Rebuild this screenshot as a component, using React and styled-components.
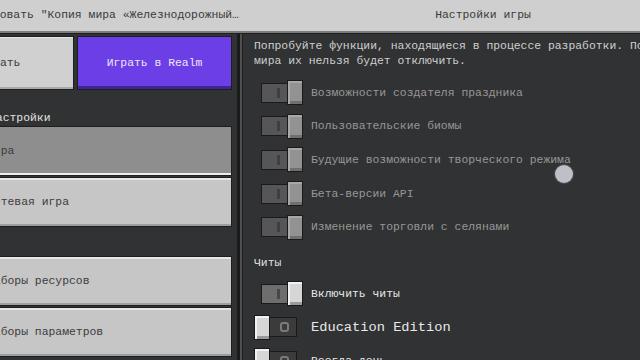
import React from "react";
import styled, { createGlobalStyle } from "styled-components";

const GlobalStyle = createGlobalStyle`
  html, body {
    margin: 0;
    padding: 0;
    background: #313233;
    overflow: hidden;
  }
  body {
    width: 640px;
    height: 360px;
  }
`;

// the screen is wider than the window: it is cropped on both sides
const Screen = styled.div`
  position: relative;
  width: 807px;
  height: 360px;
  margin-left: -84px;
  display: flex;
  flex-direction: column;
  font-family: "Liberation Mono", "DejaVu Sans Mono", monospace;
  font-size: 11.4px;
  background: #313233;
  overflow: hidden;
`;

const TopBar = styled.header`
  flex-shrink: 0;
  display: grid;
  grid-template-columns: 320px 7px 480px;
  height: 31px;
  line-height: 31px;
  background: #cfcfcf;
  border-bottom: 2px solid #7c7c7c;
  color: #3a3a3a;
`;

const TitleLeft = styled.div`
  padding-left: 29px;
  white-space: nowrap;
`;

const TitleRight = styled.div`
  grid-column: 3;
  text-align: center;
`;

const Body = styled.div`
  flex: 1;
  display: flex;
  min-height: 0;
  border-top: 1px solid #1e1e1f;
`;

const LeftPanel = styled.div`
  width: 320px;
  box-sizing: border-box;
  padding: 2px 4px 0 3px;
  display: flex;
  flex-direction: column;
`;

const ButtonRow = styled.div`
  display: flex;
  gap: 3px;
`;

const BigButton = styled.div`
  width: 155px;
  height: 54px;
  box-sizing: border-box;
  border: 1px solid #1e1e1f;
  display: flex;
  align-items: center;
  justify-content: center;
  background: ${(p) => (p.$primary ? "#6c3ee6" : "#d0d0d0")};
  color: ${(p) => (p.$primary ? "#ece6ff" : "#3a3a3a")};
  box-shadow: ${(p) =>
    p.$primary
      ? "inset 0 -3px 0 #3e2494"
      : "inset 0 1px 0 #e8e8e8, inset 0 -2px 0 #a9a9a9"};
`;

const SectionLabel = styled.div`
  padding: 20px 0 0 70px;
  line-height: 16px;
  color: #e2e2e2;
`;

const TabGroup = styled.div`
  display: flex;
  flex-direction: column;
  gap: 1px;
  margin-top: ${(p) => p.$gap || 0}px;
`;

const Tab = styled.div`
  height: 50px;
  box-sizing: border-box;
  border: 1px solid #1e1e1f;
  padding-left: 67px;
  display: flex;
  align-items: center;
  color: #3c3c3c;
  background: ${(p) => (p.$selected ? "#8e8e8e" : "#c6c6c6")};
  box-shadow: ${(p) =>
    p.$selected
      ? "inset 0 -2px 0 #ececec"
      : "inset 0 2px 0 #e6e6e6, inset 0 -2px 0 #9e9e9e"};
`;

const Divider = styled.div`
  width: 7px;
  flex-shrink: 0;
  background: linear-gradient(
    to right,
    #313233 0 1px,
    #1b1b1c 1px 4px,
    #505051 4px 6px,
    #1f1f20 6px 7px
  );
`;

const RightPanel = styled.div`
  width: 480px;
  box-sizing: border-box;
  padding: 4.5px 0 0 11px;
  display: flex;
  flex-direction: column;
`;

const Paragraph = styled.div`
  line-height: 15px;
  color: #cfcfcf;
  white-space: nowrap;
  span {
    display: block;
  }
`;

const ToggleList = styled.div`
  margin-top: ${(p) => p.$top || 0}px;
  display: flex;
  flex-direction: column;
`;

const Row = styled.div`
  height: 33.6px;
  display: flex;
  align-items: center;
  white-space: nowrap;
`;

const Track = styled.div`
  position: relative;
  width: 36px;
  height: 20px;
  box-sizing: border-box;
  margin-left: 7px;
  flex-shrink: 0;
  border: 1px solid #1a1a1b;
  display: flex;
  align-items: center;
  background: ${(p) =>
    !p.$on ? "#3b3b3c" : p.$disabled ? "#565658" : "#6e6e6e"};
`;

const Bar = styled.div`
  margin-left: 15px;
  width: 3px;
  height: 10px;
  background: ${(p) => (p.$disabled ? "#3f3f40" : "#474747")};
`;

const Ring = styled.div`
  margin-left: 18px;
  width: 5px;
  height: 6px;
  border: 2px solid #7a7a7a;
  border-radius: 3px;
`;

const Knob = styled.div`
  position: absolute;
  top: -3.5px;
  ${(p) => (p.$on ? "right: -7px;" : "left: -8px;")}
  width: 16px;
  height: 25px;
  box-sizing: border-box;
  border: 1px solid #1a1a1b;
  background: ${(p) => (p.$disabled ? "#929292" : "#d6d6d6")};
  box-shadow: ${(p) =>
    p.$disabled
      ? "inset 2px 2px 0 #a8a8a8, inset 0 -3px 0 #707070"
      : "inset 2px 2px 0 #f2f2f2, inset 0 -3px 0 #9a9a9a"};
`;

const Label = styled.span`
  margin-left: 14px;
  color: ${(p) => (p.$disabled ? "#979797" : "#e8e8e8")};
  font-size: ${(p) => (p.$large ? "13.7px" : "inherit")};
`;

const Heading = styled.div`
  margin: 11.7px 0 6.1px;
  line-height: 15px;
  color: #e0e0e0;
`;

const CursorDot = styled.div`
  position: absolute;
  left: 639px;
  top: 165px;
  width: 18px;
  height: 18px;
  border-radius: 50%;
  background: rgba(206, 206, 216, 0.9);
  box-shadow: 0 0 2px rgba(206, 206, 216, 0.6);
`;

const Toggle = ({ on, disabled }) => (
  <Track $on={on} $disabled={disabled}>
    {on ? <Bar $disabled={disabled} /> : <Ring />}
    <Knob $on={on} $disabled={disabled} />
  </Track>
);

const experiments = [
  "Возможности создателя праздника",
  "Пользовательские биомы",
  "Будущие возможности творческого режима",
  "Бета-версии API",
  "Изменение торговли с селянами",
];

const App = () => {
  return (
    <>
      <GlobalStyle />
      <Screen>
        <TopBar>
          <TitleLeft>Редактировать "Копия мира «Железнодорожный…</TitleLeft>
          <TitleRight>Настройки игры</TitleRight>
        </TopBar>
        <Body>
          <LeftPanel>
            <ButtonRow>
              <BigButton>Создать</BigButton>
              <BigButton $primary>Играть в Realm</BigButton>
            </ButtonRow>
            <SectionLabel>Настройки</SectionLabel>
            <TabGroup>
              <Tab $selected>Игра</Tab>
              <Tab>Сетевая игра</Tab>
            </TabGroup>
            <TabGroup $gap={29}>
              <Tab>Наборы ресурсов</Tab>
              <Tab>Наборы параметров</Tab>
            </TabGroup>
          </LeftPanel>
          <Divider />
          <RightPanel>
            <Paragraph>
              <span>
                Попробуйте функции, находящиеся в процессе разработки. После создания
              </span>
              <span>мира их нельзя будет отключить.</span>
            </Paragraph>
            <ToggleList $top={7.5}>
              {experiments.map((name) => (
                <Row key={name}>
                  <Toggle on disabled />
                  <Label $disabled>{name}</Label>
                </Row>
              ))}
            </ToggleList>
            <Heading>Читы</Heading>
            <ToggleList>
              <Row>
                <Toggle on />
                <Label>Включить читы</Label>
              </Row>
              <Row>
                <Toggle />
                <Label $large>Education Edition</Label>
              </Row>
              <Row>
                <Toggle />
                <Label>Всегда день</Label>
              </Row>
            </ToggleList>
          </RightPanel>
        </Body>
        <CursorDot />
      </Screen>
    </>
  );
};

export default App;
